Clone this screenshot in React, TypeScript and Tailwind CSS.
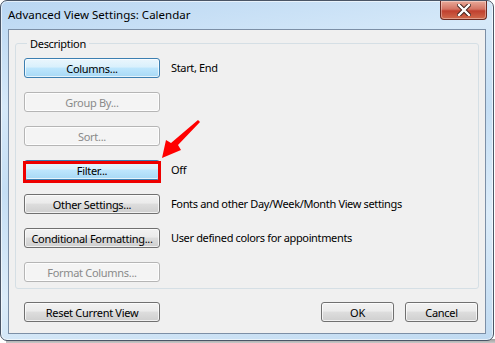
import React from "react";

type Variant = "normal" | "blue" | "disabled";

function Btn({ label, variant = "normal", w = "w-[136px]" }: { label: string; variant?: Variant; w?: string }) {
  const base = `${w} h-[20px] shrink-0 whitespace-nowrap rounded-[3px] border flex items-center justify-center text-[11px] tracking-[-0.3px] leading-none`;
  if (variant === "blue") {
    return (
      <div className={`${base} border-[#3c7fb1] text-black bg-[linear-gradient(to_bottom,#eaf6fd_0%,#d9f0fc_45%,#bee6fd_50%,#a7d9f5_100%)] shadow-[inset_0_0_0_1px_rgba(255,255,255,0.7)]`}>
        {label}
      </div>
    );
  }
  if (variant === "disabled") {
    return (
      <div className={`${base} border-[#b5b5b5] text-[#8a8a8a] bg-[#f4f4f4] shadow-[inset_0_0_0_1px_rgba(255,255,255,0.8)]`}>
        {label}
      </div>
    );
  }
  return (
    <div className={`${base} border-[#707070] text-black bg-[linear-gradient(to_bottom,#f2f2f2_0%,#ebebeb_45%,#dddddd_50%,#cfcfcf_100%)] shadow-[inset_0_0_0_1px_rgba(255,255,255,0.7)]`}>
      {label}
    </div>
  );
}

function Row({ children, text }: { children: React.ReactNode; text?: string }) {
  return (
    <div className="flex items-center h-[20px]">
      {children}
      {text && <span className="ml-[11px] whitespace-nowrap text-[11px] tracking-[-0.35px] text-black">{text}</span>}
    </div>
  );
}

export default function App() {
  return (
    <div
      className="relative w-[495px] h-[343px] bg-white overflow-hidden"
      style={{ fontFamily: '"Noto Sans", "DejaVu Sans", sans-serif' }}
    >
      {/* bottom shadow */}
      <div className="absolute left-[6px] right-0 bottom-0 h-[4px] bg-[linear-gradient(to_bottom,#9a9a9a,#c8c8c8)]" />
      <div className="relative w-[494px] h-[341px] rounded-[7px] border border-[#4a5566] bg-[linear-gradient(170deg,#b9d6f2_0%,#d6e9f9_25%,#c5def4_45%,#dcecf9_70%,#c0daf1_100%)] flex flex-col shadow-[inset_0_0_0_1px_rgba(255,255,255,0.6)]">
        {/* title bar */}
        <div className="h-[28px] flex items-start">
          <div className="pl-[7px] pt-[6px] text-[11.5px] text-black leading-[16px] whitespace-nowrap">Advanced View Settings: Calendar</div>
          <div className="ml-auto mr-[6px] w-[47px] h-[19px] rounded-b-[4px] border border-t-0 border-[#6b2a22] bg-[linear-gradient(to_bottom,#e9a999_0%,#d47463_45%,#c0402f_55%,#d06a4c_100%)] flex items-center justify-center shadow-[inset_0_0_0_1px_rgba(255,255,255,0.35)]">
            <svg width="14" height="12" viewBox="0 0 14 12">
              <path d="M2 1 L12 11 M12 1 L2 11" stroke="#3b1d18" strokeWidth="4.2" strokeLinecap="square" />
              <path d="M2 1 L12 11 M12 1 L2 11" stroke="#ffffff" strokeWidth="2.4" strokeLinecap="square" />
            </svg>
          </div>
        </div>
        {/* content */}
        <div className="mx-[7px] mb-[6px] flex-1 border border-[#7c8fa6] bg-[#f0f0f0] flex flex-col px-[6px] pt-[6px]">
          <fieldset className="border border-[#d5dfe5] rounded-[3px] px-[8px] pb-[6px] flex flex-col gap-[14px]">
            <legend className="ml-[3px] px-[3px] text-[11px] tracking-[-0.3px] leading-[15px] text-black">Description</legend>
            <div className="mt-[7px]">
              <Row text="Start, End">
                <Btn label="Columns..." variant="blue" />
              </Row>
            </div>
            <Row>
              <Btn label="Group By..." variant="disabled" />
            </Row>
            <Row>
              <Btn label="Sort..." variant="disabled" />
            </Row>
            <Row text="Off">
              <div className="relative">
                <Btn label="Filter..." variant="blue" />
                <div className="absolute -left-[1px] top-[1px] w-[138px] h-[22px] border-[3px] border-[#ee0000]" />
              </div>
            </Row>
            <Row text="Fonts and other Day/Week/Month View settings">
              <Btn label="Other Settings..." />
            </Row>
            <Row text="User defined colors for appointments">
              <Btn label="Conditional Formatting..." />
            </Row>
            <Row>
              <Btn label="Format Columns..." variant="disabled" />
            </Row>
          </fieldset>
          <div className="flex items-center mt-[13px] pl-[9px] pr-[1px]">
            <Btn label="Reset Current View" />
            <div className="ml-auto flex gap-[11px]">
              <Btn label="OK" w="w-[73px]" />
              <Btn label="Cancel" w="w-[73px]" />
            </div>
          </div>
        </div>
      </div>
      {/* red arrow */}
      <svg className="absolute left-0 top-0 pointer-events-none" width="495" height="343">
        <polygon points="200,122 178,145 181,150 162,158 166,140 171,143 198,120" fill="#ff0000" />
      </svg>
    </div>
  );
}
